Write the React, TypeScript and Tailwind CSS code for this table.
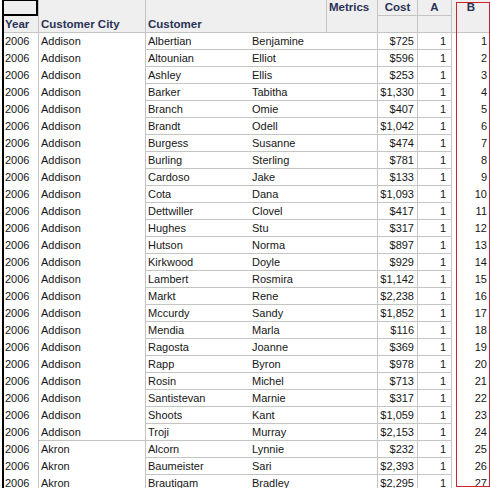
import React from "react";

const rows: [string, string, string, string][] = [
  ["Addison", "Albertian", "Benjamine", "$725"],
  ["Addison", "Altounian", "Elliot", "$596"],
  ["Addison", "Ashley", "Ellis", "$253"],
  ["Addison", "Barker", "Tabitha", "$1,330"],
  ["Addison", "Branch", "Omie", "$407"],
  ["Addison", "Brandt", "Odell", "$1,042"],
  ["Addison", "Burgess", "Susanne", "$474"],
  ["Addison", "Burling", "Sterling", "$781"],
  ["Addison", "Cardoso", "Jake", "$133"],
  ["Addison", "Cota", "Dana", "$1,093"],
  ["Addison", "Dettwiller", "Clovel", "$417"],
  ["Addison", "Hughes", "Stu", "$317"],
  ["Addison", "Hutson", "Norma", "$897"],
  ["Addison", "Kirkwood", "Doyle", "$929"],
  ["Addison", "Lambert", "Rosmira", "$1,142"],
  ["Addison", "Markt", "Rene", "$2,238"],
  ["Addison", "Mccurdy", "Sandy", "$1,852"],
  ["Addison", "Mendia", "Marla", "$116"],
  ["Addison", "Ragosta", "Joanne", "$369"],
  ["Addison", "Rapp", "Byron", "$978"],
  ["Addison", "Rosin", "Michel", "$713"],
  ["Addison", "Santistevan", "Marnie", "$317"],
  ["Addison", "Shoots", "Kant", "$1,059"],
  ["Addison", "Troji", "Murray", "$2,153"],
  ["Akron", "Alcorn", "Lynnie", "$232"],
  ["Akron", "Baumeister", "Sari", "$2,393"],
  ["Akron", "Brautigam", "Bradley", "$2,295"],
];

export default function App() {
  return (
    <div className="relative h-[488px] w-[490px] overflow-hidden bg-white font-['Liberation_Sans',Arial,sans-serif] text-[11px] text-[#161616]">
      <div className="ml-[2px] border-l-2 border-black">
        {/* Header */}
        <div className="flex h-[33px] border-b border-[#c4c4c4] bg-[#efefef] text-[11.5px] font-bold text-[#2a3256]">
          <div className="flex w-[35px] flex-col border-r border-[#c4c4c4]">
            <div className="h-[16px] w-[34px] border-t border-r-2 border-b-2 border-black" />
            <div className="h-[16px] pl-[1px] leading-[16px]">Year</div>
          </div>
          <div className="flex w-[107px] items-end border-r border-[#c4c4c4] pl-[2px] leading-[16px]">
            Customer City
          </div>
          <div className="flex w-[181px] items-end border-r border-[#c4c4c4] pl-[2px] leading-[16px]">
            Customer
          </div>
          <div className="w-[51px] border-r border-[#c4c4c4] pl-[2px] leading-[15px]">Metrics</div>
          <div className="w-[40px] border-r border-[#c4c4c4]">
            <div className="h-[16px] border-b border-[#c4c4c4] text-center leading-[15px]">Cost</div>
          </div>
          <div className="w-[34px] border-r border-[#c4c4c4]">
            <div className="h-[16px] border-b border-[#c4c4c4] text-center leading-[15px]">A</div>
          </div>
          <div className="w-[38px]">
            <div className="h-[16px] text-center leading-[15px]">B</div>
          </div>
        </div>

        {/* Rows */}
        {rows.map(([city, last, first, cost], i) => {
          const groupEnd = i === rows.length - 1 || rows[i + 1][0] !== city;
          return (
            <div key={last} className="flex h-[17px] leading-[16px]">
              <div className="w-[35px] border-r border-[#c4c4c4] pl-[1px]">2006</div>
              <div
                className={
                  groupEnd
                    ? "w-[107px] border-r border-b border-[#c4c4c4] pl-[2px]"
                    : "w-[107px] border-r border-[#c4c4c4] pl-[2px]"
                }
              >
                {city}
              </div>
              <div className="w-[104px] border-b border-[#c4c4c4] pl-[2px]">{last}</div>
              <div className="w-[128px] border-r border-b border-[#c4c4c4] pl-[2px]">{first}</div>
              <div className="w-[40px] border-r border-b border-[#c4c4c4] pr-[3px] text-right">{cost}</div>
              <div className="w-[34px] border-r border-b border-[#c4c4c4] pr-[5px] text-right">1</div>
              <div className="w-[38px] pr-[3px] text-right">{i + 1}</div>
            </div>
          );
        })}
      </div>

      {/* highlighted column */}
      <div className="pointer-events-none absolute top-[2px] left-[456px] h-[485px] w-[34px] border border-[#c8242b]" />
    </div>
  );
}
